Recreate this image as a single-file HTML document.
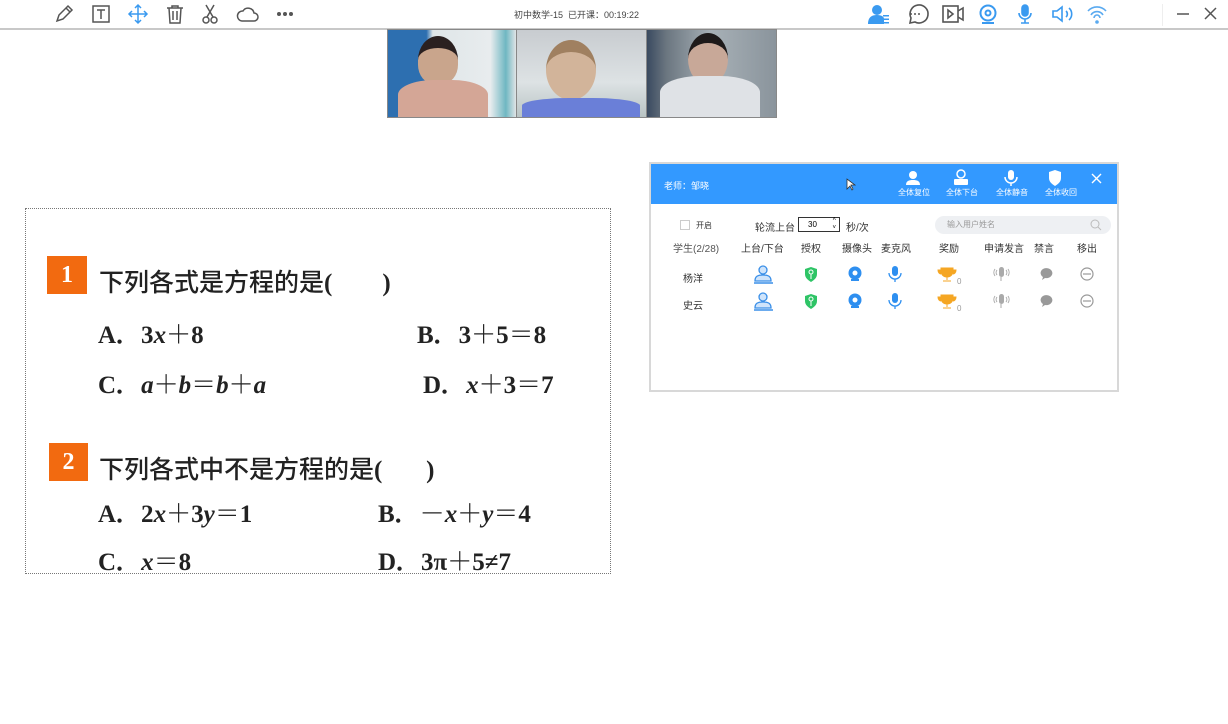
<!DOCTYPE html>
<html><head><meta charset="utf-8"><style>
*{margin:0;padding:0;box-sizing:border-box}
body{width:1228px;height:724px;background:#fff;position:relative;overflow:hidden;font-family:"Liberation Sans","Noto Sans CJK SC",sans-serif}
.a{position:absolute}
.bar{left:0;top:0;width:1228px;height:30px;background:#fff;border-bottom:2px solid #c8c8c8}
.s{font-family:"Liberation Serif","Noto Serif CJK SC",serif;font-weight:bold;color:#222;font-size:25px;white-space:nowrap}
.s i{font-style:italic}
.cn{font-family:"Noto Sans CJK SC",sans-serif;font-weight:500}
.t{font-size:10px;color:#333;white-space:nowrap}
.w{font-size:8px;color:#fff;white-space:nowrap}
</style></head><body>
<div class="a bar"></div>
<!-- left toolbar icons -->
<svg class="a" style="left:52px;top:2px" width="250" height="24" viewBox="0 0 250 24" fill="none" stroke="#555" stroke-width="1.5">
<path d="M5 19l2-6 9-9 4 4-9 9z M14 6l4 4"/>
<rect x="41" y="4" width="16" height="16"/><path d="M45 8h8M49 8v9"/>
<g stroke="#3a9af0"><path d="M86 3v18M77 12h18M83 6l3-3 3 3M83 18l3 3 3-3M80 9l-3 3 3 3M92 9l3 3-3 3"/></g>
<path d="M115 6h16M120 6V4h6v2M117 6l1 15h10l1-15M121 9v9M125 9v9"/>
<circle cx="154" cy="18" r="3"/><circle cx="162" cy="18" r="3"/><path d="M155 15l7-12M161 15l-7-12"/>
<path d="M190 19h12a4 4 0 0 0 0-8 6 6 0 0 0-11-2 5 5 0 0 0-1 10z"/>
<g fill="#555" stroke="none"><circle cx="227" cy="12" r="2"/><circle cx="233" cy="12" r="2"/><circle cx="239" cy="12" r="2"/></g>
</svg>
<div class="a" style="left:514px;top:8px;font-size:9px;color:#444">初中数学-15&nbsp;&nbsp;已开课：00:19:22</div>
<!-- right icons -->
<svg class="a" style="left:866px;top:2px" width="250" height="24" viewBox="0 0 250 24" fill="none" stroke-width="1.6">
<g fill="#3a9af0"><circle cx="11" cy="8" r="5"/><path d="M2 22c0-7 4-9 9-9s7 2 7 4v5z"/><rect x="17" y="13" width="6" height="1.5"/><rect x="17" y="16.5" width="6" height="1.5"/><rect x="17" y="20" width="6" height="1.5"/></g>
<g stroke="#555"><path d="M49 20a9 9 0 1 0-4-4l-1 5z"/></g><g fill="#555"><circle cx="45" cy="12" r="1"/><circle cx="49" cy="12" r="1"/><circle cx="53" cy="12" r="1"/></g>
<g stroke="#555"><rect x="77" y="4" width="15" height="16"/><path d="M92 9l5-3v12l-5-3M82 8v8l5-4z"/></g>
<g stroke="#3a9af0" stroke-width="2"><circle cx="122" cy="11" r="7.5"/><circle cx="122" cy="11" r="2.5"/><path d="M116 21h12"/></g>
<g stroke="#3a9af0"><rect x="156" y="3" width="6" height="11" rx="3" fill="#3a9af0"/><path d="M153 11a6 6 0 0 0 12 0M159 17v4M155 21h8"/></g>
<g stroke="#3a9af0"><path d="M187 9h4l5-4v14l-5-4h-4zM200 9a4 4 0 0 1 0 6M203 6a8 8 0 0 1 0 12"/></g>
<g stroke="#5aaaf0"><path d="M222 9a12 12 0 0 1 18 0M225 13a7 7 0 0 1 12 0M228 16a3 3 0 0 1 6 0"/><circle cx="231" cy="20" r="1" fill="#5aaaf0"/></g>
</svg>
<div class="a" style="left:1162px;top:4px;width:1px;height:22px;background:#eee"></div>
<svg class="a" style="left:1172px;top:4px" width="50" height="20" fill="none" stroke="#555" stroke-width="1.5"><path d="M5 10h12M33 4l11 11M44 4L33 15"/></svg>
<!-- videos -->
<div class="a" style="left:387px;top:29px;width:390px;height:89px;background:#888"></div>
<div class="a" style="left:388px;top:30px;width:128px;height:87px;background:linear-gradient(90deg,#2d6fb0 0,#2d6fb0 30%,#dfe6e8 35%,#e8ecee 80%,#6fb7c2 92%,#e0e4e6 100%)"></div>
<div class="a" style="left:418px;top:36px;width:40px;height:48px;border-radius:50% 50% 40% 40%;background:#c9a58c;border-top:12px solid #2a2020"></div>
<div class="a" style="left:398px;top:80px;width:90px;height:37px;border-radius:40% 40% 0 0;background:#d4a696"></div>
<div class="a" style="left:517px;top:30px;width:129px;height:87px;background:linear-gradient(180deg,#c8ccd0,#dde2e4 60%,#b9c4c4)"></div>
<div class="a" style="left:546px;top:40px;width:50px;height:60px;border-radius:50%;background:#d2b49a;border-top:12px solid #a08060"></div>
<div class="a" style="left:522px;top:98px;width:118px;height:19px;border-radius:40% 40% 0 0;background:#6a7fd8"></div>
<div class="a" style="left:647px;top:30px;width:129px;height:87px;background:linear-gradient(90deg,#3a4a60 0,#6b7680 15%,#a7b0b6 50%,#8a949c 100%)"></div>
<div class="a" style="left:688px;top:33px;width:40px;height:52px;border-radius:50%;background:#c8a898;border-top:10px solid #1e1a1a"></div>
<div class="a" style="left:660px;top:76px;width:100px;height:41px;border-radius:40% 40% 0 0;background:#dfe2e6"></div>
<!-- slide -->
<div class="a" style="left:25px;top:208px;width:586px;height:366px;border:1px dotted #777"></div>
<div class="a" style="left:47px;top:256px;width:40px;height:38px;background:#f26a10;color:#fff;font:bold 24px 'Liberation Serif',serif;text-align:center;line-height:38px">1</div>
<div class="a s" style="left:99px;top:263px"><span class="cn">下列各式是方程的是</span>(&nbsp;&nbsp;&nbsp;&nbsp;&nbsp;&nbsp;&nbsp;&nbsp;)</div>
<div class="a s" style="left:98px;top:315px">A．3<i>x</i>＋8</div>
<div class="a s" style="left:417px;top:315px">B．3＋5＝8</div>
<div class="a s" style="left:98px;top:365px">C．<i>a</i>＋<i>b</i>＝<i>b</i>＋<i>a</i></div>
<div class="a s" style="left:423px;top:365px">D．<i>x</i>＋3＝7</div>
<div class="a" style="left:49px;top:443px;width:39px;height:38px;background:#f26a10;color:#fff;font:bold 24px 'Liberation Serif',serif;text-align:center;line-height:38px">2</div>
<div class="a s" style="left:99px;top:450px"><span class="cn">下列各式中不是方程的是</span>(&nbsp;&nbsp;&nbsp;&nbsp;&nbsp;&nbsp;&nbsp;)</div>
<div class="a s" style="left:98px;top:494px">A．2<i>x</i>＋3<i>y</i>＝1</div>
<div class="a s" style="left:378px;top:494px">B．－<i>x</i>＋<i>y</i>＝4</div>
<div class="a s" style="left:98px;top:542px">C．<i>x</i>＝8</div>
<div class="a s" style="left:378px;top:542px">D．3π＋5≠7</div>
<!-- panel -->
<div class="a" style="left:649px;top:162px;width:470px;height:230px;border:2px solid #d8d8d8;background:#fff"></div>
<div class="a" style="left:651px;top:164px;width:466px;height:40px;background:#3399ff"></div>
<div class="a w" style="left:664px;top:179px;font-size:9px">老师：邹晓</div>
<svg class="a" style="left:846px;top:178px" width="10" height="14"><path d="M1 1v10l3-3 2 4 1-1-2-4h4z" fill="#fff" stroke="#333" stroke-width=".8"/></svg>
<svg class="a" style="left:900px;top:169px" width="200" height="18" fill="#fff">
<circle cx="13" cy="6" r="4"/><path d="M6 16c0-4 3-5 7-5s7 1 7 5z"/>
<circle cx="61" cy="5" r="4" fill="none" stroke="#fff" stroke-width="1.5"/><rect x="54" y="10" width="14" height="6" rx="1"/>
<rect x="108" y="1" width="6" height="10" rx="3"/><path d="M105 8a6 6 0 0 0 12 0M111 14v3" stroke="#fff" fill="none" stroke-width="1.5"/>
<path d="M155 1l6 2v6c0 4-3 6-6 8-3-2-6-4-6-8V3z"/>
</svg>
<div class="a w" style="left:898px;top:187px">全体复位</div>
<div class="a w" style="left:946px;top:187px">全体下台</div>
<div class="a w" style="left:996px;top:187px">全体静音</div>
<div class="a w" style="left:1045px;top:187px">全体收回</div>
<svg class="a" style="left:1091px;top:173px" width="11" height="11"><path d="M1 1l9 9M10 1l-9 9" stroke="#fff" stroke-width="1.4"/></svg>
<div class="a" style="left:680px;top:220px;width:10px;height:10px;border:1px solid #ccc"></div>
<div class="a t" style="left:696px;top:220px;font-size:8px">开启</div>
<div class="a t" style="left:755px;top:219px">轮流上台</div>
<div class="a" style="left:798px;top:217px;width:42px;height:15px;border:1px solid #333;font-size:8px;line-height:13px;padding-left:9px">30<span style="position:absolute;right:3px;top:-2px;font-size:6px;line-height:8px">˄<br>˅</span></div>
<div class="a t" style="left:846px;top:219px">秒/次</div>
<div class="a" style="left:935px;top:216px;width:176px;height:18px;border-radius:9px;background:#eef0f3;font-size:8px;color:#999;line-height:18px;padding-left:12px">输入用户姓名</div>
<svg class="a" style="left:1090px;top:219px" width="12" height="12" fill="none" stroke="#bbb"><circle cx="5" cy="5" r="4"/><path d="M8 8l3 3"/></svg>
<div class="a t" style="left:673px;top:240px;color:#555">学生(2/28)</div>
<div class="a t" style="left:741px;top:240px">上台/下台</div>
<div class="a t" style="left:801px;top:240px">授权</div>
<div class="a t" style="left:842px;top:240px">摄像头</div>
<div class="a t" style="left:881px;top:240px">麦克风</div>
<div class="a t" style="left:939px;top:240px">奖励</div>
<div class="a t" style="left:984px;top:240px">申请发言</div>
<div class="a t" style="left:1034px;top:240px">禁言</div>
<div class="a t" style="left:1077px;top:240px">移出</div>
<div class="a t" style="left:683px;top:270px">杨洋</div>
<div class="a t" style="left:683px;top:297px">史云</div>
<svg class="a" style="left:750px;top:264px" width="360" height="50">
<defs><g id="r">
<circle cx="13" cy="6" r="4" fill="#cfe4fb" stroke="#3a8fe8" stroke-width="1.3"/><path d="M5 17c0-5 3-6 8-6s8 1 8 6z" fill="#cfe4fb" stroke="#3a8fe8" stroke-width="1.3"/><path d="M4 19h19" stroke="#3a8fe8" stroke-width="1.5"/>
<path d="M61 3l6 2v5c0 4-3 6-6 8-3-2-6-4-6-8V5z" fill="#2ec466"/><circle cx="61" cy="8" r="2" fill="none" stroke="#fff"/><path d="M61 10v5" stroke="#fff"/>
<circle cx="105" cy="9" r="6.5" fill="#2e8ff0"/><circle cx="105" cy="9" r="2.5" fill="#fff"/><path d="M101 16h8" stroke="#2e8ff0" stroke-width="2"/>
<rect x="142" y="2" width="6" height="10" rx="3" fill="#2e8ff0"/><path d="M139 9a6 6 0 0 0 12 0M145 15v3" stroke="#2e8ff0" fill="none" stroke-width="1.3"/>
<path d="M191 4h12v3c0 4-3 6-6 6s-6-2-6-6zM191 6h-3c0 3 2 4 3 4M203 6h3c0 3-2 4-3 4M197 13v3M193 17h8" fill="#f5a623" stroke="#f5a623"/><text x="207" y="20" font-size="8" fill="#999" font-family="Liberation Sans">0</text>
<rect x="249" y="3" width="5" height="10" rx="2.5" fill="#aaa"/><path d="M247 6a4 4 0 0 0 0 5M245 5a6 6 0 0 0 0 7M256 6a4 4 0 0 1 0 5M258 5a6 6 0 0 1 0 7M251 13v4" stroke="#aaa" fill="none"/>
<path d="M293 5a6 5 0 1 1 2 9l-3 2 1-3a6 5 0 0 1 0-8z" fill="#999"/>
<circle cx="337" cy="10" r="6" fill="none" stroke="#999" stroke-width="1.2"/><path d="M333 10h8" stroke="#999" stroke-width="1.2"/>
</g></defs>
<use href="#r"/><use href="#r" y="27"/>
</svg>
</body></html>
